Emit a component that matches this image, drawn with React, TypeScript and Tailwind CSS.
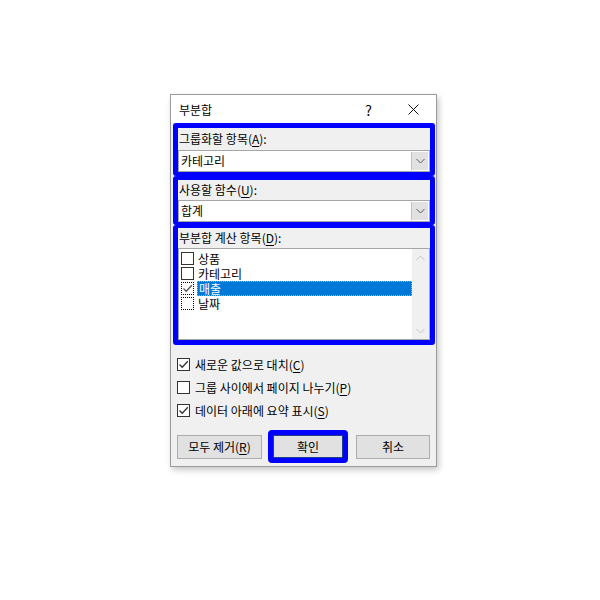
import React from "react";

const Chevron = ({ up = false, color = "#5a5a5a" }: { up?: boolean; color?: string }) => (
  <svg width="9" height="6" viewBox="0 0 9 6" className="block">
    <path
      d={up ? "M0.5 5 L4.5 1 L8.5 5" : "M0.5 1 L4.5 5 L8.5 1"}
      fill="none"
      stroke={color}
      strokeWidth="1"
    />
  </svg>
);

const Check = ({ color = "#333" }: { color?: string }) => (
  <svg width="11" height="11" viewBox="0 0 11 11" className="block">
    <path d="M1.5 5.5 L4.2 8.2 L9.8 2.3" fill="none" stroke={color} strokeWidth="1.3" />
  </svg>
);

const Combo = ({ value }: { value: string }) => (
  <div className="h-[22px] flex items-stretch bg-white border border-[#a6a6a6]">
    <div className="flex-1 flex items-center pl-[2px] leading-[16px]">{value}</div>
    <div className="w-[17px] my-[1px] mr-[1px] bg-[#e1e1e1] border-l border-[#c0c0c0] flex items-center justify-center">
      <Chevron />
    </div>
  </div>
);

const U = ({ c }: { c: string }) => <span className="underline underline-offset-2">{c}</span>;

const ListRow = ({
  label,
  checked = false,
  selected = false,
  dotted = false,
}: {
  label: string;
  checked?: boolean;
  selected?: boolean;
  dotted?: boolean;
}) => (
  <div className="h-[15px] flex items-center leading-[13px]">
    <div
      className={
        "ml-[1px] w-[13px] h-[13px] bg-white flex items-center justify-center " +
        (dotted ? "border border-dotted border-black" : "border border-[#333]")
      }
    >
      {checked && <Check color="#555" />}
    </div>
    <div
      className={
        "ml-[3px] flex-1 h-[15px] flex items-center pl-[1px] " +
        (selected ? "bg-[#0078d7] text-white border border-dotted border-[#ffa040]" : "")
      }
    >
      {label}
    </div>
  </div>
);

const CheckRow = ({ label, checked }: { label: React.ReactNode; checked: boolean }) => (
  <div className="h-[23px] flex items-center leading-[16px]">
    <div className="w-[13px] h-[13px] border border-[#333] bg-white flex items-center justify-center">
      {checked && <Check />}
    </div>
    <div className="ml-[5px]">{label}</div>
  </div>
);

export default function App() {
  return (
    <div className="w-[600px] min-h-[600px] bg-white pl-[170px] pt-[94px] font-['Noto_Sans_CJK_KR',sans-serif] text-[12px] text-black">
      <div className="w-[267px] border border-[#9a9a9a] bg-[#f0f0f0] shadow-[2px_3px_6px_rgba(0,0,0,0.22)]">
        {/* Title bar */}
        <div className="h-[28px] bg-white flex items-center leading-[16px]">
          <div className="pl-[8px] flex-1 pt-[2px]">부분합</div>
          <div className="w-[45px] h-full flex items-center justify-center text-[14px] pt-[1px]">?</div>
          <div className="w-[45px] h-full flex items-center justify-center">
            <svg width="11" height="11" viewBox="0 0 11 11" className="block">
              <path d="M0.5 0.5 L10.5 10.5 M10.5 0.5 L0.5 10.5" stroke="#111" strokeWidth="1" fill="none" />
            </svg>
          </div>
        </div>

        {/* Body */}
        <div className="pl-[2px] pr-[1px]">
          <div className="border-x-[5px] border-t-[5px] border-b-[4px] border-[#0000ff] rounded-[3px]">
            <div className="h-[22px] flex items-center pl-[1px] leading-[16px]">
              그룹화할 항목(<U c="A" />):
            </div>
            <Combo value="카테고리" />
          </div>
          <div className="border-x-[5px] border-t-[4px] border-b-[3px] border-[#0000ff] rounded-[3px]">
            <div className="h-[20px] flex items-center pl-[1px] leading-[16px]">
              사용할 함수(<U c="U" />):
            </div>
            <Combo value="합계" />
          </div>
          <div className="border-x-[5px] border-t-[3px] border-b-[5px] border-[#0000ff] rounded-[3px]">
            <div className="h-[20px] flex items-center pl-[1px] leading-[16px]">
              부분합 계산 항목(<U c="D" />):
            </div>
            <div className="h-[92px] bg-white border border-[#a6a6a6] flex">
              <div className="flex-1 pt-[2px] pl-[1px]">
                <ListRow label="상품" />
                <ListRow label="카테고리" />
                <ListRow label="매출" checked selected dotted />
                <ListRow label="날짜" dotted />
              </div>
              <div className="w-[17px] bg-[#f0f0f0] flex flex-col justify-between">
                <div className="h-[17px] flex items-center justify-center">
                  <Chevron up color="#c2c2c2" />
                </div>
                <div className="h-[17px] flex items-center justify-center">
                  <Chevron color="#c2c2c2" />
                </div>
              </div>
            </div>
          </div>

          {/* Options */}
          <div className="mt-[8px] pl-[4px]">
            <CheckRow checked label={<>새로운 값으로 대치(<U c="C" />)</>} />
            <CheckRow checked={false} label={<>그룹 사이에서 페이지 나누기(<U c="P" />)</>} />
            <CheckRow checked label={<>데이터 아래에 요약 표시(<U c="S" />)</>} />
          </div>

          {/* Buttons */}
          <div className="mt-[8px] mb-[3px] pl-[4px] h-[33px] flex items-center leading-[16px]">
            <div className="w-[85px] h-[24px] bg-[#e1e1e1] border border-[#adadad] flex items-center justify-center">
              모두 제거(<U c="R" />)
            </div>
            <div className="ml-[6px] w-[80px] h-[33px] border-[5px] border-[#0000ff] rounded-[4px]">
              <div className="w-full h-full bg-[#e1e1e1] border border-[#1c3d8c] flex items-center justify-center">
                확인
              </div>
            </div>
            <div className="ml-[8px] w-[74px] h-[24px] bg-[#e1e1e1] border border-[#adadad] flex items-center justify-center">
              취소
            </div>
          </div>
        </div>
      </div>
    </div>
  );
}
